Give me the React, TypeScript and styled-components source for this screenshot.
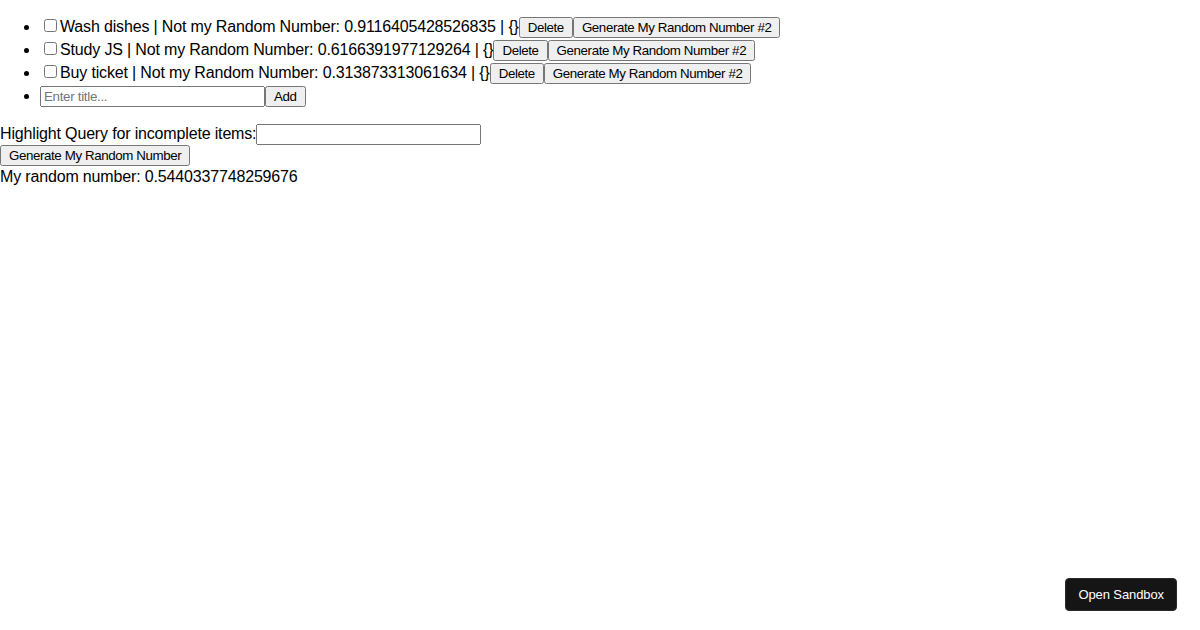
import { useState } from 'react';
import styled, { createGlobalStyle } from 'styled-components';

interface Todo {
  id: number;
  title: string;
  notMine: number;
  done: boolean;
}

const initialTodos: Todo[] = [
  { id: 1, title: 'Wash dishes', notMine: 0.9116405428526835, done: false },
  { id: 2, title: 'Study JS', notMine: 0.6166391977129264, done: false },
  { id: 3, title: 'Buy ticket', notMine: 0.313873313061634, done: false },
];

const App = () => {
  const [todos, setTodos] = useState<Todo[]>(initialTodos);
  const [title, setTitle] = useState('');
  const [query, setQuery] = useState('');
  const [mine, setMine] = useState(0.5440337748259676);

  const addTodo = () => {
    if (!title) return;
    setTodos([
      ...todos,
      { id: Date.now(), title, notMine: Math.random(), done: false },
    ]);
    setTitle('');
  };

  return (
    <>
      <GlobalStyle />
      <TodoList>
        {todos.map((todo) => (
          <TodoItem key={todo.id}>
            <Checkbox
              type="checkbox"
              checked={todo.done}
              onChange={() =>
                setTodos(
                  todos.map((t) =>
                    t.id === todo.id ? { ...t, done: !t.done } : t,
                  ),
                )
              }
            />
            {todo.title} | Not my Random Number: {todo.notMine} | {'{}'}
            <Button
              onClick={() => setTodos(todos.filter((t) => t.id !== todo.id))}
            >
              Delete
            </Button>
            <Button
              onClick={() =>
                setTodos(
                  todos.map((t) =>
                    t.id === todo.id ? { ...t, notMine: Math.random() } : t,
                  ),
                )
              }
            >
              Generate My Random Number #2
            </Button>
          </TodoItem>
        ))}
        <TodoItem>
          <TextInput
            placeholder="Enter title..."
            value={title}
            onChange={(e) => setTitle(e.target.value)}
          />
          <Button onClick={addTodo}>Add</Button>
        </TodoItem>
      </TodoList>
      <QueryLabel>
        Highlight Query for incomplete items:
        <TextInput value={query} onChange={(e) => setQuery(e.target.value)} />
      </QueryLabel>
      <div>
        <Button onClick={() => setMine(Math.random())}>
          Generate My Random Number
        </Button>
      </div>
      <Result>My random number: {mine}</Result>
      <SandboxButton>Open Sandbox</SandboxButton>
    </>
  );
};

export default App;

const GlobalStyle = createGlobalStyle`
  body {
    margin: 0;
    background: #fff;
    color: #000;
    font-family: "Liberation Sans", Arial, sans-serif;
    font-size: 16px;
    letter-spacing: -0.16px;
  }
`;

const TodoList = styled.ul`
  margin: 15px 0 16px;
  padding-left: 40px;
`;

const TodoItem = styled.li`
  line-height: 23px;
`;

const Checkbox = styled.input`
  margin: 3px 3px 3px 4px;
`;

const Button = styled.button`
  font-family: "Liberation Sans", Arial, sans-serif;
  font-size: 13.333px;
  letter-spacing: -0.4px;
  line-height: normal;
  height: 21px;
  padding: 1px 7px;
  color: #000;
`;

const TextInput = styled.input`
  font-family: "Liberation Sans", Arial, sans-serif;
  font-size: 13.333px;
  letter-spacing: -0.3px;
  width: 225px;
  height: 21px;
  box-sizing: border-box;
  padding: 1px 2px;
  &::placeholder {
    color: #757575;
  }
`;

const QueryLabel = styled.label`
  display: block;
  line-height: 21px;
`;

const Result = styled.div`
  line-height: 22px;
`;

const SandboxButton = styled.button`
  position: fixed;
  right: 23px;
  bottom: 19px;
  height: 33px;
  padding: 0 12px;
  border: 1px solid #2a2a2a;
  border-radius: 4px;
  background: #151515;
  color: #fff;
  font-family: "Liberation Sans", Arial, sans-serif;
  font-size: 13px;
  letter-spacing: -0.1px;
  cursor: pointer;
`;
